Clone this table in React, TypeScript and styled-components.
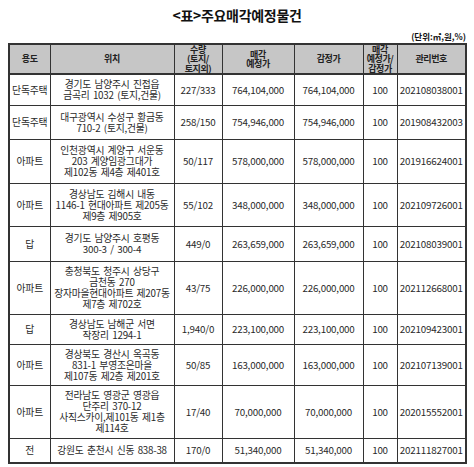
import React from 'react'
import styled, { createGlobalStyle } from 'styled-components'

const GlobalStyle = createGlobalStyle`
  html, body {
    margin: 0;
    padding: 0;
    background: #ffffff;
  }
  body {
    font-family: 'Noto Sans CJK KR', 'Noto Sans', sans-serif;
    color: #222222;
  }
`

interface Row {
  use: string
  place: string[]
  qty: string
  sale: string
  appraisal: string
  ratio: string
  code: string
  h: number
}

const rows: Row[] = [
  { use: '단독주택', place: ['경기도 남양주시 진접읍', '금곡리 1032 (토지,건물)'], qty: '227/333', sale: '764,104,000', appraisal: '764,104,000', ratio: '100', code: '202108038001', h: 32 },
  { use: '단독주택', place: ['대구광역시 수성구 황금동', '710-2 (토지,건물)'], qty: '258/150', sale: '754,946,000', appraisal: '754,946,000', ratio: '100', code: '201908432003', h: 34 },
  { use: '아파트', place: ['인천광역시 계양구 서운동', '203 계양임광그대가', '제102동 제4층 제401호'], qty: '50/117', sale: '578,000,000', appraisal: '578,000,000', ratio: '100', code: '201916624001', h: 44 },
  { use: '아파트', place: ['경상남도 김해시 내동', '1146-1 현대아파트 제205동', '제9층 제905호'], qty: '55/102', sale: '348,000,000', appraisal: '348,000,000', ratio: '100', code: '202109726001', h: 43 },
  { use: '답', place: ['경기도 남양주시 호평동', '300-3 / 300-4'], qty: '449/0', sale: '263,659,000', appraisal: '263,659,000', ratio: '100', code: '202108039001', h: 35 },
  { use: '아파트', place: ['충청북도 청주시 상당구', '금천동 270', '장자마을현대아파트 제207동', '제7층 제702호'], qty: '43/75', sale: '226,000,000', appraisal: '226,000,000', ratio: '100', code: '202112668001', h: 53 },
  { use: '답', place: ['경상남도 남해군 서면', '작장리 1294-1'], qty: '1,940/0', sale: '223,100,000', appraisal: '223,100,000', ratio: '100', code: '202109423001', h: 30 },
  { use: '아파트', place: ['경상북도 경산시 옥곡동', '831-1 부영조은마을', '제107동 제2층 제201호'], qty: '50/85', sale: '163,000,000', appraisal: '163,000,000', ratio: '100', code: '202107139001', h: 41 },
  { use: '아파트', place: ['전라남도 영광군 영광읍', '단주리 370-12', '사직스카이,제101동 제1층', '제114호'], qty: '17/40', sale: '70,000,000', appraisal: '70,000,000', ratio: '100', code: '202015552001', h: 53 },
  { use: '전', place: ['강원도 춘천시 신동 838-38'], qty: '170/0', sale: '51,340,000', appraisal: '51,340,000', ratio: '100', code: '202111827001', h: 24 },
]

const colWidths = [41, 124, 48, 72, 69, 34, 69]

const Page = styled.div`
  width: 474px;
  height: 467px;
  overflow: hidden;
`

const Title = styled.div`
  height: 30px;
  line-height: 30px;
  text-align: center;
  font-size: 14px;
  font-weight: 700;
  letter-spacing: -0.3px;
  color: #111111;
`

const Unit = styled.div`
  height: 13px;
  line-height: 13px;
  padding-right: 8px;
  text-align: right;
  font-size: 8.5px;
  font-weight: 700;
  color: #111111;
`

const Table = styled.table`
  margin-left: 8px;
  width: 457px;
  table-layout: fixed;
  border-collapse: collapse;
  border: 2px solid #333333;
`

const HeadRow = styled.tr`
  height: 29px;
  background: #c6c6c6;
`

const HeadCell = styled.th`
  border: 1px solid #333333;
  border-bottom-width: 2px;
  padding: 0;
  font-size: 9px;
  font-weight: 700;
  line-height: 9.3px;
  letter-spacing: -0.4px;
  text-align: center;
  vertical-align: middle;
  color: #222222;
`

const BodyRow = styled.tr<{ $h: number }>`
  height: ${({ $h }) => $h}px;
`

const Cell = styled.td<{ $wide?: boolean }>`
  border: 1px solid #333333;
  padding: 0;
  font-size: 9.8px;
  line-height: 11px;
  letter-spacing: ${({ $wide }) => ($wide ? '-0.25px' : '-0.2px')};
  word-spacing: ${({ $wide }) => ($wide ? '1.5px' : '0')};
  text-align: center;
  vertical-align: middle;
  color: #2a2a2a;
  white-space: nowrap;
`

const Lines = styled.div`
  display: flex;
  flex-direction: column;
  align-items: center;
`

const App: React.FC = () => {
  return (
    <Page>
      <GlobalStyle />
      <Title>&lt;표&gt;주요매각예정물건</Title>
      <Unit>(단위:㎡,원,%)</Unit>
      <Table>
        <colgroup>
          {colWidths.map((w, i) => (
            <col key={i} style={{ width: w }} />
          ))}
        </colgroup>
        <thead>
          <HeadRow>
            <HeadCell>용도</HeadCell>
            <HeadCell>위치</HeadCell>
            <HeadCell>
              수량
              <br />
              (토지/
              <br />
              토지외)
            </HeadCell>
            <HeadCell>
              매각
              <br />
              예정가
            </HeadCell>
            <HeadCell>감정가</HeadCell>
            <HeadCell>
              매각
              <br />
              예정가/
              <br />
              감정가
            </HeadCell>
            <HeadCell>관리번호</HeadCell>
          </HeadRow>
        </thead>
        <tbody>
          {rows.map((row) => (
            <BodyRow key={row.code} $h={row.h}>
              <Cell>{row.use}</Cell>
              <Cell $wide>
                <Lines>
                  {row.place.map((line) => (
                    <span key={line}>{line}</span>
                  ))}
                </Lines>
              </Cell>
              <Cell>{row.qty}</Cell>
              <Cell>{row.sale}</Cell>
              <Cell>{row.appraisal}</Cell>
              <Cell>{row.ratio}</Cell>
              <Cell>{row.code}</Cell>
            </BodyRow>
          ))}
        </tbody>
      </Table>
    </Page>
  )
}

export default App
